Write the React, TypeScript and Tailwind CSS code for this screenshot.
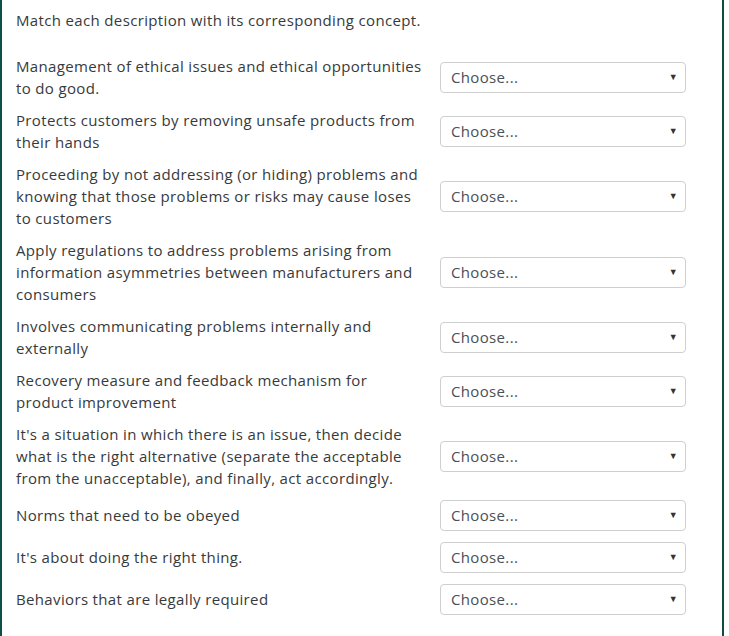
import React from 'react';

const items: string[] = [
  'Management of ethical issues and ethical opportunities to do good.',
  'Protects customers by removing unsafe products from their hands',
  'Proceeding by not addressing (or hiding) problems and knowing that those problems or risks may cause loses to customers',
  'Apply regulations to address problems arising from information asymmetries between manufacturers and consumers',
  'Involves communicating problems internally and externally',
  'Recovery measure and feedback mechanism for product improvement',
  "It's a situation in which there is an issue, then decide what is the right alternative (separate the acceptable from the unacceptable), and finally, act accordingly.",
  'Norms that need to be obeyed',
  "It's about doing the right thing.",
  'Behaviors that are legally required',
];

const Select: React.FC = () => (
  <div className="relative w-[246px] h-[31px] shrink-0 rounded-[4px] border border-[#cfcfcf] bg-white flex items-center pl-[10px] text-[#495057]">
    <span>Choose...</span>
    <span className="absolute right-[7px] top-1/2 -translate-y-1/2 text-[9px] text-[#333]">▼</span>
  </div>
);

export default function App() {
  return (
    <div className="min-h-[636px] bg-white" style={{ fontFamily: '"Open Sans", Lato, sans-serif' }}>
      <div className="w-[724px] min-h-[636px] border-x-2 border-[#0d4f47] pl-[14px] pt-[9px] text-[15px] leading-[22px] text-[#373a3c] tracking-[0.35px]">
        <p>Match each description with its corresponding concept.</p>
        <div className="mt-[24px] flex flex-col gap-[10px]">
          {items.map((t, i) => (
            <div key={i} className="flex items-center gap-[12px] min-h-[32px]">
              <div className="w-[412px]">{t}</div>
              <Select />
            </div>
          ))}
        </div>
      </div>
    </div>
  );
}
